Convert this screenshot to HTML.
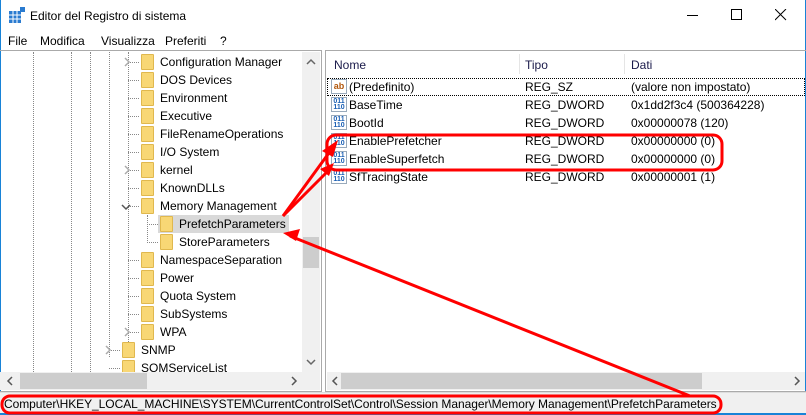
<!DOCTYPE html>
<html><head><meta charset="utf-8"><style>
*{margin:0;padding:0;box-sizing:border-box}
body{width:806px;height:415px;overflow:hidden;background:#fff;font-family:"Liberation Sans",sans-serif;font-size:12px;color:#000;position:relative}
.abs{position:absolute}
.t{position:absolute;white-space:nowrap;line-height:18px}
.fold{position:absolute;width:13px;height:16px;background:#f8d775;border:1px solid #e0b84e;border-radius:1px}
.dv{position:absolute;border-left:1px dotted #888;width:0}
.dh{position:absolute;border-top:1px dotted #888;height:0}
.ic{position:absolute;width:16px;height:15px;border:1px solid #9ab;background:#fff;font-size:7px;line-height:6px;color:#1a5fb4;font-weight:bold;text-align:center}
.chev{position:absolute;font-size:14px;line-height:18px;color:#999}
</style></head><body>
<div class="abs" style="left:0;top:0;width:806px;height:415px;border:1px solid #1883d7;border-top:none"></div>
<svg class="abs" style="left:9px;top:7px" width="16" height="16"><rect x="0" y="4" width="12" height="12" fill="#2a7bd0"/><g stroke="#fff" stroke-width="1"><line x1="0" y1="8" x2="12" y2="8"/><line x1="0" y1="12" x2="12" y2="12"/><line x1="4" y1="4" x2="4" y2="16"/><line x1="8" y1="4" x2="8" y2="16"/></g><rect x="11" y="0" width="5" height="5" fill="#2a7bd0"/></svg>
<div class="t" style="left:30px;top:7px;font-size:12px">Editor del Registro di sistema</div>
<div class="abs" style="left:687px;top:15px;width:11px;height:1px;background:#000"></div>
<div class="abs" style="left:731px;top:9px;width:11px;height:11px;border:1px solid #000"></div>
<svg class="abs" style="left:775px;top:9px" width="12" height="12"><path d="M0 0L11 11M11 0L0 11" stroke="#000" stroke-width="1"/></svg>
<div class="t" style="left:8px;top:32px">File</div>
<div class="t" style="left:40px;top:32px">Modifica</div>
<div class="t" style="left:101px;top:32px">Visualizza</div>
<div class="t" style="left:165px;top:32px">Preferiti</div>
<div class="t" style="left:220px;top:32px">?</div>
<div class="abs" style="left:0;top:50px;width:322px;height:342px;border:1px solid #aaa;border-left:none"></div>
<div class="dv" style="left:33px;top:52px;height:320px"></div>
<div class="dv" style="left:71px;top:52px;height:320px"></div>
<div class="dv" style="left:90px;top:52px;height:320px"></div>
<div class="dv" style="left:109px;top:52px;height:305px"></div>
<div class="dv" style="left:128px;top:52px;height:290px"></div>
<div class="dv" style="left:147px;top:215px;height:28px"></div>
<div id="tree"></div>
<div class="abs" style="left:302px;top:52px;width:18px;height:320px;background:#f0f0f0"></div>
<div class="abs" style="left:303px;top:237px;width:16px;height:31px;background:#cdcdcd"></div>
<svg class="abs" style="left:306px;top:58px" width="10" height="8"><path d="M1 6L5 2L9 6" stroke="#666" stroke-width="1.5" fill="none"/></svg>
<svg class="abs" style="left:306px;top:358px" width="10" height="8"><path d="M1 2L5 6L9 2" stroke="#666" stroke-width="1.5" fill="none"/></svg>
<div class="abs" style="left:0;top:372px;width:320px;height:18px;background:#f0f0f0"></div>
<div class="abs" style="left:20px;top:373px;width:127px;height:16px;background:#cdcdcd"></div>
<svg class="abs" style="left:6px;top:376px" width="8" height="10"><path d="M6 1L2 5L6 9" stroke="#555" stroke-width="1.5" fill="none"/></svg>
<svg class="abs" style="left:290px;top:376px" width="8" height="10"><path d="M2 1L6 5L2 9" stroke="#555" stroke-width="1.5" fill="none"/></svg>
<div class="abs" style="left:325px;top:50px;width:481px;height:342px;border:1px solid #aaa;border-right:none"></div>
<div class="abs" style="left:519px;top:54px;width:1px;height:20px;background:#e5e5e5"></div>
<div class="abs" style="left:624px;top:54px;width:1px;height:20px;background:#e5e5e5"></div>
<div class="t" style="left:334px;top:56px;color:#1a1a4a">Nome</div>
<div class="t" style="left:525px;top:56px;color:#1a1a4a">Tipo</div>
<div class="t" style="left:631px;top:56px;color:#1a1a4a">Dati</div>
<div class="abs" style="left:327px;top:78px;width:478px;height:18px;border:1px dotted #000"></div>
<div class="abs" style="left:327px;top:372px;width:478px;height:18px;background:#f0f0f0"></div>
<div class="abs" style="left:341px;top:373px;width:361px;height:16px;background:#cdcdcd"></div>
<svg class="abs" style="left:331px;top:376px" width="8" height="10"><path d="M6 1L2 5L6 9" stroke="#555" stroke-width="1.5" fill="none"/></svg>
<svg class="abs" style="left:793px;top:376px" width="8" height="10"><path d="M2 1L6 5L2 9" stroke="#555" stroke-width="1.5" fill="none"/></svg>
<div id="vals"></div>
<div class="abs" style="left:0;top:392px;width:806px;height:22px;background:#f0f0f0;border-top:1px solid #ddd"></div>
<div class="abs" style="left:0;top:413px;width:806px;height:2px;background:#1883d7"></div>
<div class="t" style="left:4px;top:395px;letter-spacing:-0.05px">Computer\HKEY_LOCAL_MACHINE\SYSTEM\CurrentControlSet\Control\Session Manager\Memory Management\PrefetchParameters</div>
<svg class="abs" style="left:0;top:0" width="806" height="415">
<g stroke="#f00" stroke-width="3" fill="none">
<rect x="327" y="135" width="395" height="35" rx="9"/>
<rect x="2" y="396" width="719" height="17" rx="8"/>
<line x1="283" y1="216" x2="334" y2="146"/>
<line x1="283" y1="216" x2="330" y2="169"/>
<line x1="690" y1="396" x2="290" y2="236"/>
</g>
<g fill="#f00">
<polygon points="338,140 322,151 333,157"/>
<polygon points="334,163 320,169 329,176"/>
<polygon points="283,233 300,229 296,241"/>
</g>
</svg>
<script>
var tr=[["Configuration Manager",141,1],["DOS Devices",141],["Environment",141],["Executive",141],["FileRenameOperations",141],["I/O System",141],["kernel",141,1],["KnownDLLs",141],["Memory Management",141,2],["PrefetchParameters",160,0,1],["StoreParameters",160],["NamespaceSeparation",141],["Power",141],["Quota System",141],["SubSystems",141],["WPA",141,1],["SNMP",122,1],["SOMServiceList",122]];
var h="";tr.forEach(function(r,i){var y=53+i*18;var fx=r[1];
if(r[3])h+='<div class="abs" style="left:'+(fx-2)+'px;top:'+y+'px;width:131px;height:18px;background:#d9d9d9"></div>';
h+='<div class="dh" style="left:'+(fx-13)+'px;top:'+(y+9)+'px;width:11px"></div>';
h+='<div class="fold" style="left:'+fx+'px;top:'+(y+1)+'px"></div>';
h+='<div class="t" style="left:'+(fx+19)+'px;top:'+y+'px">'+r[0]+'</div>';
if(r[2]==1)h+='<svg class="abs" style="left:'+(fx-18)+'px;top:'+(y+4)+'px" width="8" height="10"><path d="M2 1L6 5L2 9" stroke="#aaa" stroke-width="1.5" fill="none"/></svg>';
if(r[2]==2)h+='<svg class="abs" style="left:'+(fx-20)+'px;top:'+(y+6)+'px" width="10" height="8"><path d="M1 2L5 6L9 2" stroke="#555" stroke-width="1.5" fill="none"/></svg>';});
document.getElementById("tree").innerHTML=h;
var v=[["(Predefinito)","REG_SZ","(valore non impostato)"],["BaseTime","REG_DWORD","0x1dd2f3c4 (500364228)"],["BootId","REG_DWORD","0x00000078 (120)"],["EnablePrefetcher","REG_DWORD","0x00000000 (0)"],["EnableSuperfetch","REG_DWORD","0x00000000 (0)"],["SfTracingState","REG_DWORD","0x00000001 (1)"]];
h="";v.forEach(function(r,i){var y=78+i*18;
h+=i==0?'<div class="ic" style="left:331px;top:'+(y+1)+'px;color:#b0550a;font-size:9px;line-height:13px">ab</div>':'<div class="ic" style="left:331px;top:'+(y+1)+'px;padding-top:1px">011<br>110</div>';
h+='<div class="t" style="left:349px;top:'+y+'px">'+r[0]+'</div><div class="t" style="left:525px;top:'+y+'px">'+r[1]+'</div><div class="t" style="left:631px;top:'+y+'px">'+r[2]+'</div>';});
document.getElementById("vals").innerHTML=h;
</script>
</body></html>
